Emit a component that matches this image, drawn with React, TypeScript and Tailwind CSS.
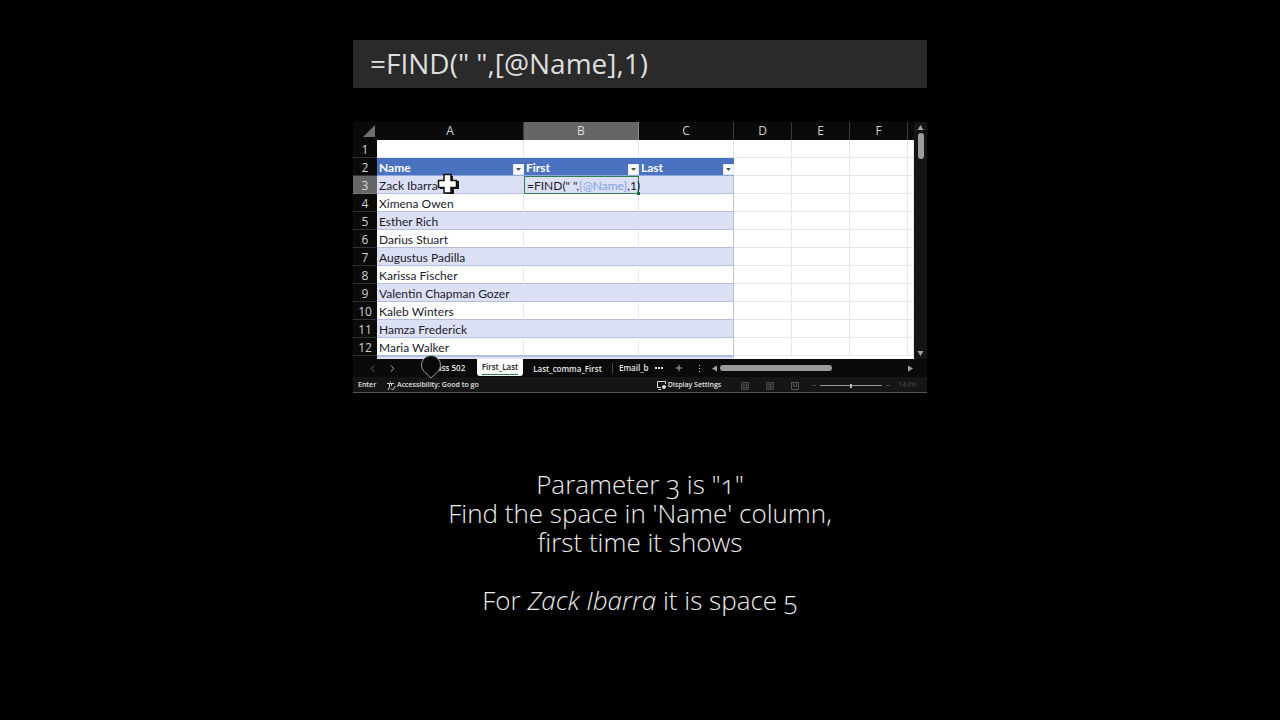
import { clsx } from "clsx";
import { ChevronLeft, ChevronRight, Plus } from "lucide-react";

const COLUMNS = ["A", "B", "C", "D", "E", "F"];

const NAMES = [
  "Zack Ibarra",
  "Ximena Owen",
  "Esther Rich",
  "Darius Stuart",
  "Augustus Padilla",
  "Karissa Fischer",
  "Valentin Chapman Gozer",
  "Kaleb Winters",
  "Hamza Frederick",
  "Maria Walker",
];

const HEADINGS = ["Name", "First", "Last"];

function CrossCursor() {
  return (
    <svg
      className="pointer-events-none absolute top-[-12px] left-[57px] z-20"
      width="24"
      height="24"
      viewBox="0 0 24 24"
      aria-hidden="true"
    >
      <path d="M9 4h8v5h6v8h-5v5h-8v-5H4V9h5z" fill="#111" />
      <path d="M8 2.500h7v6h5.500v7H15V21H8v-5.500H2.500v-7H8z" fill="#fff" stroke="#111" strokeWidth="1.500" />
    </svg>
  );
}

function FilterButton({ label }: { label: string }) {
  return (
    <button
      type="button"
      aria-label={`Filter ${label}`}
      className="flex h-[11px] w-[11px] items-center justify-center border border-[#e4e9f5] bg-white"
    >
      <svg width="5" height="3" viewBox="0 0 5 3" aria-hidden="true">
        <path d="M0 0h5L2.500 3z" fill="#555" />
      </svg>
    </button>
  );
}

function RowHeader({ n, active }: { n: number; active?: boolean }) {
  return (
    <th
      scope="row"
      className={clsx(
        "h-[18px] border-b p-0 pt-[2px] text-center font-['Open_Sans',sans-serif] text-[12px] leading-[15px] font-normal",
        active
          ? "border-[#7a7a7a] bg-[#666] text-[#d8d8d8]"
          : "border-[#333] bg-[#0a0a0a] text-[#d0d0d0]"
      )}
    >
      {n}
    </th>
  );
}

function EmptyCells({ count }: { count: number }) {
  return (
    <>
      {Array.from({ length: count }, (_, i) => (
        <td key={i} className="h-[18px] border-r border-b border-[#e6e7ea] bg-white p-0" />
      ))}
    </>
  );
}

function FormulaCell() {
  return (
    <td className="relative h-[18px] border border-[#2f7d4f] bg-[#dce0f5] p-0">
      <div
        role="textbox"
        aria-label="Cell B3"
        className="relative z-10 w-0 pt-px pl-[2px] leading-[15px] whitespace-nowrap"
      >
        =FIND(" ",<span className="text-[#7da2e6]">[@Name]</span>,1)
      </div>
      <span className="absolute right-[-2px] bottom-[-2px] h-[3px] w-[3px] bg-[#1d6b3c]" />
    </td>
  );
}

function Grid() {
  return (
    <table className="w-full table-fixed border-separate border-spacing-0 font-['Lato','Carlito',sans-serif] text-[12px] text-[#1b1b2b]">
      <colgroup>
        <col className="w-[24px]" />
        <col className="w-[147px]" />
        <col className="w-[115px]" />
        <col className="w-[95px]" />
        <col className="w-[58px]" />
        <col className="w-[58px]" />
        <col className="w-[58px]" />
        <col />
      </colgroup>
      <thead>
        <tr>
          <th className="h-[18px] bg-[#0a0a0a] p-0" aria-label="Select all">
            <svg className="ml-auto" width="15" height="14" viewBox="0 0 15 14" aria-hidden="true">
              <path d="M13 1v12H1z" fill="#6e6e6e" />
            </svg>
          </th>
          {COLUMNS.map((c) => (
            <th
              key={c}
              scope="col"
              className={clsx(
                "h-[18px] border-r p-0 text-center font-['Open_Sans',sans-serif] text-[12px] leading-[18px] font-normal",
                c === "B" ? "border-[#888] bg-[#666] text-[#ddd]" : "border-[#3a3a3a] bg-[#0a0a0a] text-[#d0d0d0]"
              )}
            >
              {c}
            </th>
          ))}
          <th className="h-[18px] bg-[#0a0a0a] p-0" />
        </tr>
      </thead>
      <tbody>
        <tr>
          <RowHeader n={1} />
          <EmptyCells count={7} />
        </tr>
        <tr>
          <RowHeader n={2} />
          {HEADINGS.map((h) => (
            <td key={h} className="h-[18px] border-b border-[#8ea9db] bg-[#4a72c0] p-0">
              <div className="flex h-[17px] items-end justify-between pl-[2px]">
                <span className="leading-[15px] font-bold text-white">{h}</span>
                <FilterButton label={h} />
              </div>
            </td>
          ))}
          <EmptyCells count={4} />
        </tr>
        {NAMES.map((name, i) => {
          const banded = i % 2 === 0;
          const cell = clsx(
            "h-[18px] border-b border-[#b4bddf] p-0",
            banded ? "bg-[#dce0f5]" : "bg-white"
          );
          return (
            <tr key={name}>
              <RowHeader n={i + 3} active={i === 0} />
              <td className={clsx(cell, "border-r", banded ? "border-r-[#dce0f5]" : "border-r-[#e8e9f0]")}>
                <div className="relative pt-[2px] pl-[2px] leading-[15px] whitespace-nowrap">
                  {name}
                  {i === 0 && (
                    <span className="absolute top-2 left-[2px]">
                      <CrossCursor />
                    </span>
                  )}
                </div>
              </td>
              {i === 0 ? (
                <FormulaCell />
              ) : (
                <td className={clsx(cell, "border-r", banded ? "border-r-[#dce0f5]" : "border-r-[#e8e9f0]")} />
              )}
              <td className={clsx(cell, "border-r border-r-[#b4bddf]")} />
              <EmptyCells count={4} />
            </tr>
          );
        })}
        <tr>
          <td className="h-[3px] bg-[#0a0a0a] p-0" />
          <td className="h-[3px] border-t border-[#b4bddf] bg-[#dce0f5] p-0" colSpan={3} />
          <td className="h-[3px] bg-white p-0" colSpan={4} />
        </tr>
      </tbody>
    </table>
  );
}

function Arrow({ d }: { d: string }) {
  return (
    <svg width="7" height="7" viewBox="0 0 7 7" aria-hidden="true" className="shrink-0">
      <path d={d} fill="#a0a0a0" />
    </svg>
  );
}

function VerticalScroll() {
  return (
    <div className="flex w-[13px] shrink-0 flex-col items-center bg-[#151515] py-[2px]">
      <Arrow d="M3.500 1 6.500 6h-6z" />
      <div className="mt-[2px] h-[26px] w-[6px] rounded-full bg-[#9b9b9b]" />
      <div className="flex-1" />
      <Arrow d="M0.500 1h6l-3 5z" />
    </div>
  );
}

function SheetTabs() {
  return (
    <div className="relative flex h-[18px] items-center bg-[#0a0a0a] font-['Open_Sans',sans-serif] text-[8px] text-[#e6e6e6]">
      <button type="button" aria-label="Previous sheet" className="ml-[14px] text-[#777]">
        <ChevronLeft size={11} />
      </button>
      <button type="button" aria-label="Next sheet" className="ml-[9px] text-[#bbb]">
        <ChevronRight size={11} />
      </button>
      <button type="button" className="ml-[39px] w-[40px] text-left font-semibold">
        ass 502
      </button>
      <button
        type="button"
        className="flex h-[17px] w-[46px] items-start justify-center self-start rounded-b-[3px] bg-white font-semibold text-[#222]"
      >
        <span className="border-b border-[#2f7d4f] leading-[15px]">First_Last</span>
      </button>
      <button type="button" className="w-[90px] border-r border-[#444] leading-[11px] font-semibold">
        Last_comma_First
      </button>
      <button type="button" className="ml-[6px] w-[32px] text-left font-semibold whitespace-nowrap">
        Email_b
      </button>
      <button type="button" aria-label="More sheets" className="ml-[4px] flex gap-px">
        <span className="h-[2px] w-[2px] bg-[#ddd]" />
        <span className="h-[2px] w-[2px] bg-[#ddd]" />
        <span className="h-[2px] w-[2px] bg-[#ddd]" />
      </button>
      <button type="button" aria-label="New sheet" className="ml-[11px] text-[#ccc]">
        <Plus size={10} />
      </button>
      <span className="ml-[15px] flex flex-col gap-[2px]" aria-hidden="true">
        <span className="h-px w-px bg-[#ddd]" />
        <span className="h-px w-px bg-[#ddd]" />
        <span className="h-px w-px bg-[#ddd]" />
      </span>
      <div className="ml-[11px] flex flex-1 items-center pr-[13px]">
        <Arrow d="M6 0.500v6l-5-3z" />
        <div className="ml-[2px] h-[6px] w-[112px] rounded-full bg-[#9b9b9b]" />
        <div className="flex-1" />
        <Arrow d="M1 0.500v6l5-3z" />
      </div>
      <svg
        className="pointer-events-none absolute top-[-5px] left-[67px]"
        width="22"
        height="26"
        viewBox="0 0 22 26"
        aria-hidden="true"
      >
        <path
          d="M11 24 4.500 18A9.500 9.500 0 1 1 17.500 18z"
          fill="#080808"
          stroke="#9a9a9a"
          strokeWidth="1"
        />
      </svg>
    </div>
  );
}

function StatusBar() {
  return (
    <div className="flex h-[16px] items-center border-b border-[#555] bg-[#151515] pt-[2px] font-['Open_Sans',sans-serif] text-[7px] font-semibold text-[#e0e0e0]">
      <span className="ml-[5px] w-[28px]">Enter</span>
      <svg width="10" height="10" viewBox="0 0 10 10" fill="none" stroke="#ccc" aria-hidden="true">
        <path d="M1 2.500h7M4.500 0.500v1M3.500 3v3L2 9M5.500 3v2M5 7.500 6.500 9 9.500 5" />
      </svg>
      <span className="ml-px">Accessibility: Good to go</span>
      <div className="flex-1" />
      <button type="button" className="flex items-center gap-px">
        <svg width="10" height="9" viewBox="0 0 10 9" fill="none" stroke="#ddd" aria-hidden="true">
          <path d="M4 6.500H0.500v-6h8V3M1.500 8.500H4" />
          <circle cx="7" cy="6" r="1.500" fill="#ddd" />
        </svg>
        Display Settings
      </button>
      <div className="ml-[20px] flex gap-[17px]">
        <button type="button" aria-label="Normal view">
          <svg width="8" height="8" viewBox="0 0 8 8" fill="none" stroke="#484848" aria-hidden="true">
            <path d="M0.500 0.500h7v7h-7zM3 0v8M5.500 0v8M0 3h8M0 5.500h8" />
          </svg>
        </button>
        <button type="button" aria-label="Page layout">
          <svg width="8" height="8" viewBox="0 0 8 8" fill="#2c2c2c" stroke="#444" aria-hidden="true">
            <path d="M0.500 0.500h7v7h-7zM2.500 2.500h3M2.500 4h3M2.500 5.500h3" />
          </svg>
        </button>
        <button type="button" aria-label="Page break preview">
          <svg width="8" height="8" viewBox="0 0 8 8" fill="none" stroke="#555" aria-hidden="true">
            <path d="M0.500 0.500h7v7h-7zM2.500 0v4.500h3V0" />
          </svg>
        </button>
      </div>
      <span className="ml-[13px] h-px w-[4px] bg-[#444]" />
      <input
        type="range"
        aria-label="Zoom"
        min={10}
        max={190}
        defaultValue={100}
        className="mx-[4px] h-px w-[62px] appearance-none bg-[#999] [&::-webkit-slider-thumb]:h-[4px] [&::-webkit-slider-thumb]:w-[2px] [&::-webkit-slider-thumb]:appearance-none [&::-webkit-slider-thumb]:bg-[#bbb]"
      />
      <span className="h-px w-[4px] bg-[#444]" />
      <span className="mr-[11px] ml-[8px] font-normal text-[#4c4c4c]">143%</span>
    </div>
  );
}

export default function App() {
  return (
    <main className="min-h-screen bg-black pt-10">
      <div className="mx-auto w-full max-w-[574px]">
        <div className="flex h-[48px] items-center bg-[#2a2a2a] pb-[3px] pl-[17px] font-['Open_Sans',sans-serif] text-[28px] leading-none text-[#dedede]">
          =FIND(" ",[@Name],1)
        </div>

        <section className="mt-[34px]" aria-label="Worksheet">
          <div className="flex">
            <div className="min-w-0 flex-1">
              <Grid />
            </div>
            <VerticalScroll />
          </div>
          <SheetTabs />
          <StatusBar />
        </section>

        <p className="mt-[77px] text-center font-['Open_Sans',sans-serif] text-[26px] leading-[29px] font-light text-[#ececec] oldstyle-nums">
          Parameter 3 is "1"
          <br />
          Find the space in 'Name' column,
          <br />
          first time it shows
          <br />
          <br />
          For <em>Zack Ibarra</em> it is space 5
        </p>
      </div>
    </main>
  );
}
